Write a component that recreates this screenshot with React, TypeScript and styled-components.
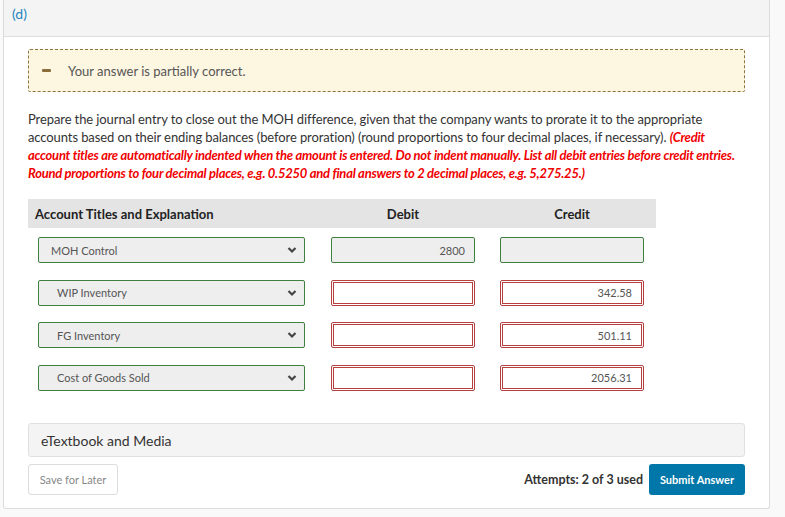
import { styled, createGlobalStyle } from "styled-components";

const GlobalStyle = createGlobalStyle`
  body {
    margin: 0;
    background: #f9f9f9;
    font-family: "Lato", "Liberation Sans", sans-serif;
  }
`;

const rows = [
  { account: "MOH Control", debit: "2800", credit: "", correct: true, indent: false },
  { account: "WIP Inventory", debit: "", credit: "342.58", correct: false, indent: true },
  { account: "FG Inventory", debit: "", credit: "501.11", correct: false, indent: true },
  { account: "Cost of Goods Sold", debit: "", credit: "2056.31", correct: false, indent: true },
];

export default function App() {
  return (
    <>
      <GlobalStyle />
      <Card>
        <Header>(d)</Header>
        <Body>
          <Feedback>
            <Minus />
            <span>Your answer is partially correct.</span>
          </Feedback>
          <Prompt>
            Prepare the journal entry to close out the MOH difference, given that the company wants to prorate it to the
            appropriate accounts based on their ending balances (before proration) (round proportions to four decimal
            places, if necessary). <Warn>(Credit account titles are automatically indented when the amount is entered. Do not indent manually. List all debit entries before credit entries. Round proportions to four decimal places, e.g. 0.5250 and final answers to 2 decimal places, e.g. 5,275.25.)</Warn>
          </Prompt>
          <Table>
            <HeadCell>Account Titles and Explanation</HeadCell>
            <HeadCell $center>Debit</HeadCell>
            <HeadCell $center>Credit</HeadCell>
            {rows.map((r) => (
              <Row key={r.account}>
                <Cell>
                  <SelectBox $indent={r.indent}>
                    <span>{r.account}</span>
                    <Chevron viewBox="0 0 10 8">
                      <path d="M1.5 2 L5 5.5 L8.5 2" fill="none" stroke="#444" strokeWidth="2.2" />
                    </Chevron>
                  </SelectBox>
                </Cell>
                <Cell $center>
                  <Amount $correct={r.correct}>{r.debit}</Amount>
                </Cell>
                <Cell $center>
                  <Amount $correct={r.correct}>{r.credit}</Amount>
                </Cell>
              </Row>
            ))}
          </Table>
          <Media>eTextbook and Media</Media>
          <Footer>
            <SaveButton>Save for Later</SaveButton>
            <Actions>
              <Attempts>Attempts: 2 of 3 used</Attempts>
              <SubmitButton>Submit Answer</SubmitButton>
            </Actions>
          </Footer>
        </Body>
      </Card>
    </>
  );
}

const Card = styled.div`
  margin-left: 3px;
  width: 767px;
  height: 509px;
  background: #fff;
  border: 1px solid #dcdcdc;
  border-top: none;
  border-radius: 0 0 3px 3px;
  box-sizing: border-box;
`;

const Header = styled.div`
  height: 37px;
  box-sizing: border-box;
  background: #f4f4f4;
  border-bottom: 1px solid #dedede;
  color: #1f86bf;
  font-size: 14px;
  padding: 5px 0 0 8px;
`;

const Body = styled.div`
  padding: 12px 24px 0 24px;
`;

const Feedback = styled.div`
  height: 43px;
  box-sizing: border-box;
  display: flex;
  align-items: center;
  gap: 17px;
  padding-left: 13px;
  background: #fdf6e1;
  border: 1px dashed #8f7440;
  border-radius: 2px;
  font-size: 13px;
  color: #555;
`;

const Minus = styled.span`
  width: 9px;
  height: 3px;
  background: #8a6d3b;
  border-radius: 1px;
`;

const Prompt = styled.p`
  margin: 18px 0 17px;
  font-size: 13px;
  line-height: 18px;
  color: #333;
  letter-spacing: -0.1px;
`;

const Warn = styled.span`
  color: #f00000;
  font-weight: 700;
  font-style: italic;
  letter-spacing: -0.25px;
`;

const Table = styled.div`
  width: 628px;
  display: grid;
  grid-template-columns: 290px 170px 168px;
`;

const HeadCell = styled.div<{ $center?: boolean }>`
  background: #e4e4e4;
  height: 29px;
  display: flex;
  align-items: center;
  justify-content: ${(p) => (p.$center ? "center" : "flex-start")};
  padding-left: ${(p) => (p.$center ? "0" : "7px")};
  font-size: 13px;
  font-weight: 700;
  color: #222;
  margin-bottom: 9px;
`;

const Row = styled.div`
  display: contents;
`;

const Cell = styled.div<{ $center?: boolean }>`
  display: flex;
  justify-content: ${(p) => (p.$center ? "center" : "flex-start")};
  padding-left: ${(p) => (p.$center ? "0" : "10px")};
  margin-bottom: 16.5px;
`;

const SelectBox = styled.div<{ $indent: boolean }>`
  width: 267px;
  height: 26px;
  box-sizing: border-box;
  display: flex;
  align-items: center;
  justify-content: space-between;
  padding: 0 7px 0 ${(p) => (p.$indent ? "18px" : "12px")};
  background: #eeeeee;
  border: 1px solid #3f7f3f;
  border-radius: 2px;
  font-size: 11px;
  color: #555;
`;

const Chevron = styled.svg`
  width: 10px;
  height: 8px;
`;

const Amount = styled.div<{ $correct: boolean }>`
  width: 144px;
  height: 26px;
  box-sizing: border-box;
  display: flex;
  align-items: center;
  justify-content: flex-end;
  padding-right: 9px;
  font-size: 11px;
  color: #555;
  background: ${(p) => (p.$correct ? "#eeeeee" : "#fff")};
  border: ${(p) => (p.$correct ? "1px solid #3f7f3f" : "3px double #b5403f")};
  border-radius: 2px;
`;

const Media = styled.div`
  margin-top: 16px;
  height: 34px;
  box-sizing: border-box;
  display: flex;
  align-items: center;
  padding-left: 12px;
  background: #f4f4f4;
  border: 1px solid #e0e0e0;
  border-radius: 3px;
  font-size: 14px;
  color: #333;
`;

const Footer = styled.div`
  margin-top: 7px;
  display: flex;
  justify-content: space-between;
  align-items: center;
`;

const SaveButton = styled.button`
  height: 31px;
  width: 90px;
  background: #fff;
  border: 1px solid #dcdcdc;
  border-radius: 3px;
  font-family: "Lato", "Liberation Sans", sans-serif;
  font-size: 11px;
  color: #888;
`;

const Actions = styled.div`
  display: flex;
  align-items: center;
  gap: 6px;
`;

const Attempts = styled.span`
  font-size: 12.5px;
  font-weight: 700;
  color: #333;
`;

const SubmitButton = styled.button`
  height: 31px;
  width: 96px;
  background: #0077a8;
  border: none;
  border-radius: 3px;
  font-family: "Lato", "Liberation Sans", sans-serif;
  font-size: 11px;
  font-weight: 700;
  color: #fff;
`;
